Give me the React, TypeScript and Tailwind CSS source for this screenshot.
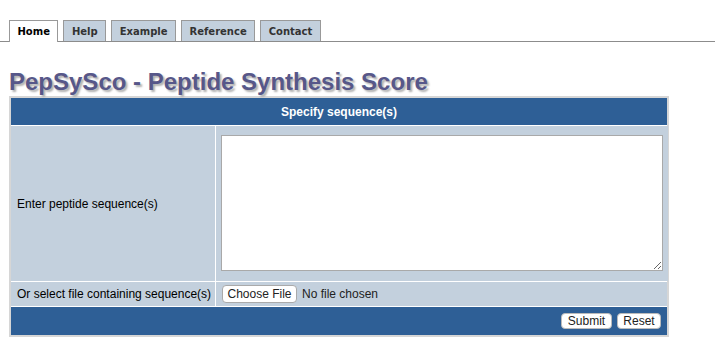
const tabs = ["Home", "Help", "Example", "Reference", "Contact"];

export default function App() {
  return (
    <div className="min-h-screen bg-white font-['Liberation_Sans',Arial,sans-serif] text-black">
      <nav className="flex items-end gap-[5px] pl-[9px] pt-[20px] border-b border-[#8c8c8c] h-[42px]">
        {tabs.map((t, i) =>
          i === 0 ? (
            <div
              key={t}
              className="h-[22px] -mb-px px-[7.5px] pt-[3px] bg-white border border-b-0 border-[#999] font-['DejaVu_Sans',Verdana,sans-serif] font-bold text-[10px] text-black"
            >
              {t}
            </div>
          ) : (
            <div
              key={t}
              className="h-[21px] px-[7.5px] pt-[3px] bg-[#c3d0dd] border border-b-0 border-[#999] font-['DejaVu_Sans',Verdana,sans-serif] font-bold text-[10px] text-[#333]"
            >
              {t}
            </div>
          )
        )}
      </nav>

      <h1 className="ml-[9px] mt-[25px] text-[24px] leading-[29px] font-bold text-[#575789] [text-shadow:2px_2px_2px_#b0b0b0]">
        PepSySco - Peptide Synthesis Score
      </h1>

      <div className="ml-[9px] w-[660px] border-2 border-[#d6d6d6] bg-white flex flex-col gap-px text-[12px]">
        <div className="h-[27px] bg-[#2e5f96] text-white font-bold flex items-center justify-center">
          Specify sequence(s)
        </div>
        <div className="grid grid-cols-[204px_1fr] gap-px">
          <div className="bg-[#c3d0dd] flex items-center pl-[6px]">Enter peptide sequence(s)</div>
          <div className="bg-[#c3d0dd] pt-[9px] pb-[10px] px-[5px]">
            <textarea className="block w-[442px] h-[136px] bg-white border border-[#a9a9a9] resize-y" />
          </div>
        </div>
        <div className="grid grid-cols-[204px_1fr] gap-px h-[24px]">
          <div className="bg-[#c3d0dd] flex items-center pl-[6px]">Or select file containing sequence(s)</div>
          <div className="bg-[#c3d0dd] flex items-center pl-[6px] gap-[5px]">
            <button className="h-[18px] w-[75px] rounded-[4px] bg-white border border-[#aaa] text-[12px] leading-none text-[#222]">
              Choose File
            </button>
            <span className="text-[#222]">No file chosen</span>
          </div>
        </div>
        <div className="h-[28px] bg-[#2e5f96] flex items-center justify-end gap-[5px] pr-[6px]">
          <button className="h-[16px] w-[51px] rounded-[4px] bg-white border border-[#bbb] text-[12px] leading-none text-[#222]">
            Submit
          </button>
          <button className="h-[16px] w-[44px] rounded-[4px] bg-white border border-[#bbb] text-[12px] leading-none text-[#222]">
            Reset
          </button>
        </div>
      </div>
    </div>
  );
}
